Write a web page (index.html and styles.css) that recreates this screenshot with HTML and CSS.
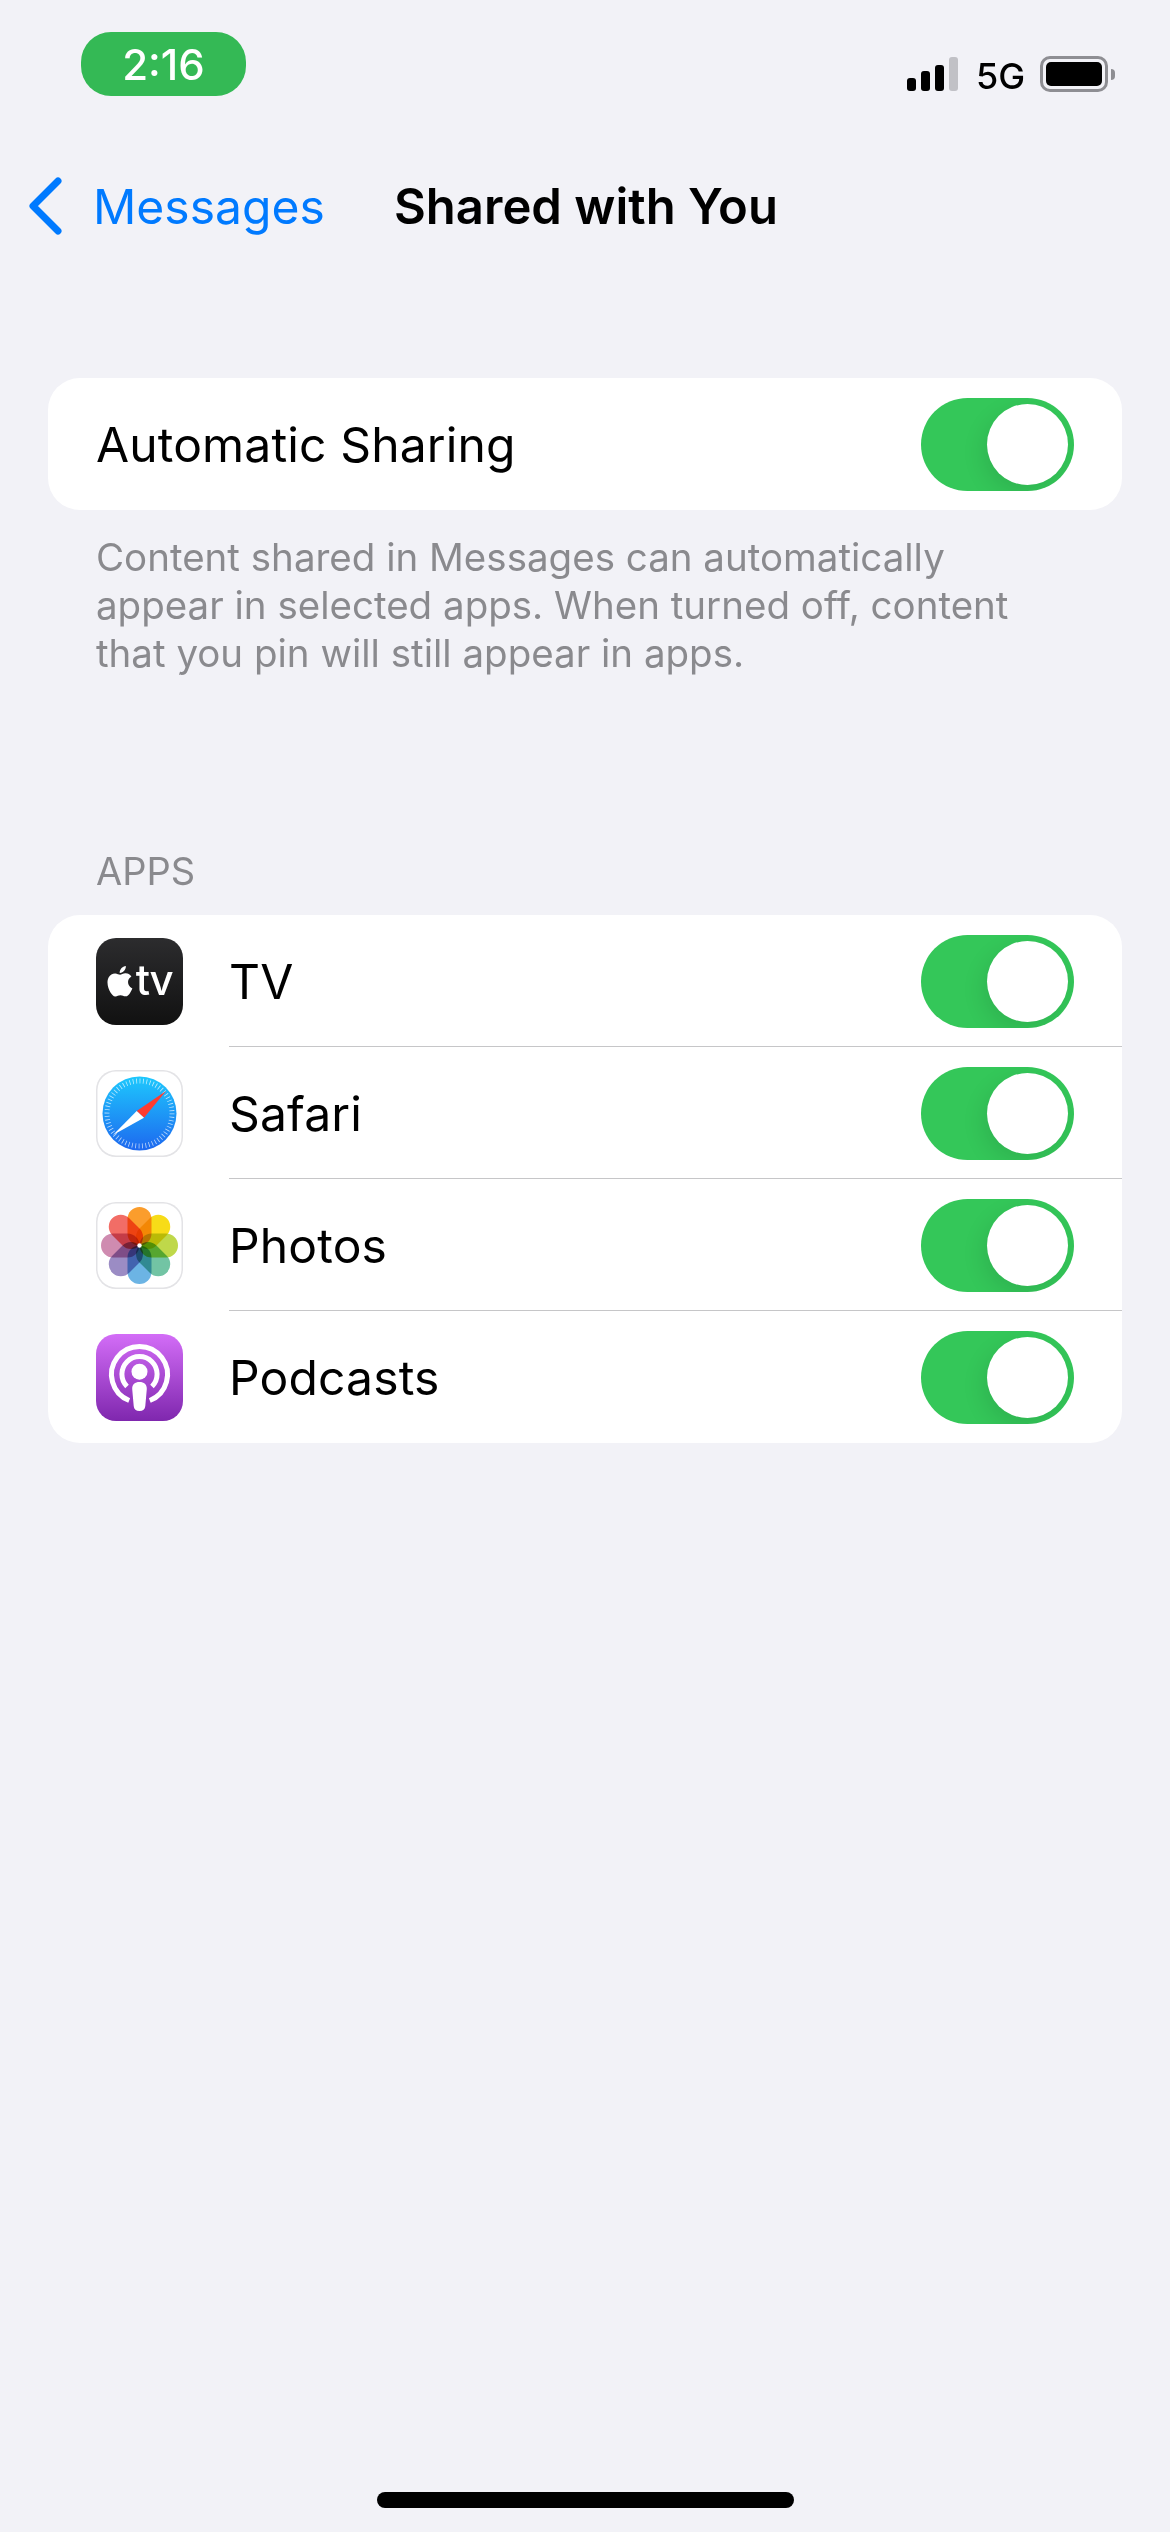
FILE: index.html
```html
<!DOCTYPE html>
<html lang="en">
<head>
<meta charset="utf-8">
<title>Shared with You</title>
<link rel="stylesheet" href="styles.css">
</head>
<body>
<div class="screen">
  <header class="status">
    <div class="pill">2:16</div>
    <div class="status-right">
      <div class="signal"><i class="b1"></i><i class="b2"></i><i class="b3"></i><i class="b4"></i></div>
      <span class="net">5G</span>
      <div class="battery"><div class="battery-body"><div class="battery-fill"></div></div><div class="battery-cap"></div></div>
    </div>
  </header>

  <nav class="nav">
    <svg class="chevron" viewBox="0 0 36 60" width="36" height="60"><path d="M31 5 L6 30 L31 55" fill="none" stroke="#007aff" stroke-width="7" stroke-linecap="round" stroke-linejoin="round"/></svg>
    <span class="back">Messages</span>
    <span class="title">Shared with You</span>
  </nav>

  <section class="card card-single">
    <div class="row row-plain">
      <span class="label">Automatic Sharing</span>
      <div class="toggle"><div class="knob"></div></div>
    </div>
  </section>
  <p class="footer">Content shared in Messages can automatically<br>appear in selected apps. When turned off, content<br>that you pin will still appear in apps.</p>

  <h2 class="section-head">APPS</h2>
  <section class="card">
    <div class="row">
      <div class="icon icon-tv">
        <svg viewBox="3 3 23.500 30" width="26" height="32"><path fill="#fff" d="M22.300 19.200c0-3.600 3-5.400 3.100-5.500-1.700-2.500-4.300-2.800-5.200-2.900-2.200-.2-4.300 1.300-5.400 1.300-1.100 0-2.900-1.300-4.700-1.200-2.400 0-4.700 1.400-5.900 3.600-2.500 4.400-.6 10.900 1.800 14.400 1.200 1.700 2.600 3.700 4.500 3.600 1.800-.1 2.500-1.200 4.700-1.200 2.200 0 2.800 1.200 4.700 1.100 2-.0 3.200-1.700 4.400-3.500 1.400-2 2-4 2-4.100-.1 0-3.900-1.500-4-5.600zM18.700 8.500c1-1.200 1.700-2.900 1.500-4.600-1.400.1-3.200 1-4.200 2.200-.9 1.100-1.700 2.800-1.500 4.400 1.600.1 3.200-.8 4.200-2z"/></svg>
        <span class="tv-text">tv</span>
      </div>
      <span class="label">TV</span>
      <div class="toggle"><div class="knob"></div></div>
    </div>
    <div class="row">
      <div class="icon icon-light">
        <svg viewBox="0 0 87 87" width="87" height="87">
          <defs><linearGradient id="saf" x1="0" y1="0" x2="0" y2="1"><stop offset="0" stop-color="#1ec8fd"/><stop offset="1" stop-color="#1d68ef"/></linearGradient></defs>
          <circle cx="43.500" cy="43.500" r="37" fill="url(#saf)"/>
          <circle cx="43.500" cy="43.500" r="32.500" fill="none" stroke="#fff" stroke-opacity=".7" stroke-width="5" stroke-dasharray=".8 2.600"/>
          <polygon points="70,21 40.700,41 48,47.700" fill="#ff3b30"/>
          <polygon points="17,65 40.700,41 48,47.700" fill="#fff"/>
        </svg>
      </div>
      <span class="label">Safari</span>
      <div class="toggle"><div class="knob"></div></div>
    </div>
    <div class="row">
      <div class="icon icon-light">
        <svg class="flower" viewBox="0 0 87 87" width="87" height="87">
          <g class="petals">
            <rect class="petal" x="31.500" y="5" width="24" height="38.500" rx="12" fill="#fb9d2c" transform="rotate(0 43.500 43.500)"/>
            <rect class="petal" x="31.500" y="5" width="24" height="38.500" rx="12" fill="#f7dc18" transform="rotate(45 43.500 43.500)"/>
            <rect class="petal" x="31.500" y="5" width="24" height="38.500" rx="12" fill="#bfd84a" transform="rotate(90 43.500 43.500)"/>
            <rect class="petal" x="31.500" y="5" width="24" height="38.500" rx="12" fill="#72c4a4" transform="rotate(135 43.500 43.500)"/>
            <rect class="petal" x="31.500" y="5" width="24" height="38.500" rx="12" fill="#6cb4e4" transform="rotate(180 43.500 43.500)"/>
            <rect class="petal" x="31.500" y="5" width="24" height="38.500" rx="12" fill="#9b8cc4" transform="rotate(225 43.500 43.500)"/>
            <rect class="petal" x="31.500" y="5" width="24" height="38.500" rx="12" fill="#cf8bb0" transform="rotate(270 43.500 43.500)"/>
            <rect class="petal" x="31.500" y="5" width="24" height="38.500" rx="12" fill="#f26d66" transform="rotate(315 43.500 43.500)"/>
          </g>
          <circle cx="43.500" cy="43.500" r="2.200" fill="#fff"/>
        </svg>
      </div>
      <span class="label">Photos</span>
      <div class="toggle"><div class="knob"></div></div>
    </div>
    <div class="row row-last">
      <div class="icon icon-pod">
        <svg viewBox="0 0 87 87" width="87" height="87">
          <path d="M33.200 66.500 A28 28 0 1 1 53.800 66.500" fill="none" stroke="#fff" stroke-width="5"/>
          <path d="M31 52.500 A17.600 17.600 0 1 1 56 52.500" fill="none" stroke="#fff" stroke-width="5"/>
          <circle cx="43.500" cy="37.700" r="8" fill="#fff"/>
          <path d="M43.500 48 C48 48 51 50.500 50.800 55 L49.300 72 C49 75.500 47 77 43.500 77 C40 77 38 75.500 37.700 72 L36.200 55 C36 50.500 39 48 43.500 48 Z" fill="#fff"/>
        </svg>
      </div>
      <span class="label">Podcasts</span>
      <div class="toggle"><div class="knob"></div></div>
    </div>
  </section>
  <div class="spacer"><div class="home"></div></div>
</div>
</body>
</html>
```
FILE: styles.css
```css
* { box-sizing: border-box; }
html, body { margin: 0; padding: 0; }
body {
  width: 1170px;
  height: 2532px;
  background: #f2f2f7;
  font-family: Inter, "Liberation Sans", sans-serif;
  color: #000;
  overflow: hidden;
}
.screen { display: flex; flex-direction: column; height: 2532px; }

.status {
  height: 166px;
  padding: 32px 0 0 81px;
  display: flex;
  justify-content: space-between;
  align-items: flex-start;
}
.pill {
  width: 165px;
  height: 64px;
  border-radius: 30px;
  background: #34b955;
  color: #fff;
  font-size: 42px;
  font-weight: 500;
  display: flex;
  align-items: center;
  justify-content: center;
}
.status-right {
  display: flex;
  align-items: center;
  margin-top: 24px;
  padding-right: 55px;
  height: 36px;
}
.signal { display: flex; align-items: flex-end; gap: 5px; height: 34px; width: 51px; }
.signal i { display: block; width: 9px; border-radius: 3px; background: #000; }
.signal .b1 { height: 13px; }
.signal .b2 { height: 20px; }
.signal .b3 { height: 26px; }
.signal .b4 { height: 34px; background: #c1c1c6; }
.net { font-size: 36px; font-weight: 500; margin: 5px 0 0 18px; width: 64px; line-height: 35px; }
.battery { display: flex; align-items: center; }
.battery-body {
  width: 68px;
  height: 36px;
  border: 3px solid #8e8e93;
  border-radius: 10px;
  padding: 3px;
}
.battery-fill { width: 100%; height: 100%; background: #000; border-radius: 5px; }
.battery-cap { width: 4px; height: 11px; margin-left: 3px; background: #8e8e93; border-radius: 0 5px 5px 0; }

.nav {
  height: 80px;
  display: flex;
  align-items: center;
  padding-left: 27px;
}
.chevron { flex: none; }
.back { color: #007aff; font-size: 48px; margin-left: 30px; width: 301px; }
.title { font-size: 49px; font-weight: 600; }

.card {
  margin: 0 48px;
  background: #fff;
  border-radius: 32px;
  overflow: hidden;
}
.card-single { margin-top: 132px; }
.row {
  height: 132px;
  display: flex;
  align-items: center;
  padding: 0 48px;
  position: relative;
}
.row::after {
  content: "";
  position: absolute;
  left: 181px;
  right: 0;
  bottom: 0;
  height: 1px;
  background: #c6c6c8;
}
.row-plain::after, .row-last::after { display: none; }
.label { font-size: 48px; letter-spacing: .15px; flex: 1; }
.icon + .label { margin-left: 46px; }

.toggle {
  width: 153px;
  height: 93px;
  border-radius: 47px;
  background: #34c759;
  position: relative;
  overflow: hidden;
  flex: none;
}
.knob {
  position: absolute;
  right: 6px;
  top: 6px;
  width: 81px;
  height: 81px;
  border-radius: 50%;
  background: #fff;
  box-shadow: -4px 8px 22px rgba(0, 0, 0, .1);
}

.footer {
  margin: 23px 0 0;
  padding: 0 96px;
  font-size: 38.500px;
  line-height: 48px;
  color: #8a8a8e;
}
.section-head {
  margin: 171px 0 0;
  padding: 0 96px;
  font-size: 38px;
  line-height: 46px;
  font-weight: 400;
  color: #8a8a8e;
}
.section-head + .card { margin-top: 21px; }

.icon {
  width: 87px;
  height: 87px;
  border-radius: 20px;
  flex: none;
  overflow: hidden;
}
.icon svg { display: block; }
.icon-light { box-shadow: inset 0 0 0 1.500px #e3e3e6; background: #fff; }
.icon-tv {
  background: linear-gradient(#2c2c2e, #111);
  color: #fff;
  display: flex;
  align-items: center;
  justify-content: center;
}
.tv-text { font-size: 42px; font-weight: 500; letter-spacing: -1.500px; line-height: 1; margin-left: 3px; margin-top: -2px; }
.icon-pod { background: linear-gradient(#d36df7, #7f27ae); }
.petals { isolation: isolate; }
.petal { mix-blend-mode: multiply; }

.spacer {
  flex: 1;
  display: flex;
  align-items: flex-end;
  justify-content: center;
  padding-bottom: 24px;
}
.home { width: 417px; height: 16px; border-radius: 8px; background: #000; }
```
